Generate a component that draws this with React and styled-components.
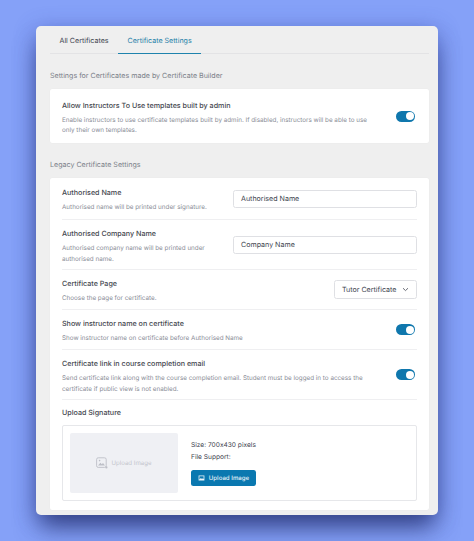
import React from "react";
import styled, { createGlobalStyle } from "styled-components";

const Global = createGlobalStyle`
  html, body { margin: 0; padding: 0; }
  body { font-family: Inter, "Liberation Sans", sans-serif; -webkit-font-smoothing: antialiased; text-rendering: geometricPrecision; }
  * { box-sizing: border-box; }
`;
const Page = styled.div`
  width: 474px; height: 541px; overflow: hidden;
  background: #85a1f8;
  padding: 26px 36px 0;
`;
const Panel = styled.div`
  width: 402px; height: 489px;
  background: #efefef;
  border-radius: 5px;
  padding: 0 9px 0 14px;
  box-shadow: 0 16px 24px -4px rgba(30, 40, 100, 0.72), 0 4px 22px rgba(50, 70, 170, 0.42);
`;
const Tabs = styled.div`
  display: flex; height: 28px;
  border-bottom: 1px solid #e3e3e5;
`;
const Tab = styled.div`
  height: 28px;
  padding: 1px 9.5px 0;
  display: flex; align-items: center;
  font-size: 7.1px;
  color: ${p => (p.$active ? "#1e7fa8" : "#41454f")};
  border-bottom: 1.5px solid ${p => (p.$active ? "#1e83ad" : "transparent")};
`;
const SectionTitle = styled.div`
  font-size: 7.1px; line-height: 12px; color: #7b7f89;
  margin-top: 16px;
  margin-bottom: 7px;
`;
const Card = styled.div`
  background: #fff;
  border-radius: 2px;
  padding: 0 12px;
  box-shadow: 0 0 1px rgba(0,0,0,.08);
`;
const TopCard = styled(Card)`
  height: 54px; display: flex; align-items: center;
  justify-content: space-between;
`;
const LegacyCard = styled(Card)`
  padding-bottom: 9px;
`;
const Row = styled.div`
  height: ${p => p.$h}px;
  display: flex; align-items: center;
  justify-content: space-between;
  border-bottom: 1px solid #efeff1;
`;
const Text = styled.div`
  width: ${p => p.$w}px; flex: none;
  padding-top: 3px;
`;
const Title = styled.div`
  font-size: 7.15px; line-height: 11px; font-weight: 500; color: #44464e;
`;
const Desc = styled.div`
  font-size: 6.3px; line-height: 10.4px; color: #8b8e98; margin-top: 4px;
`;
const Input = styled.div`
  width: 184px; height: 18px; flex: none;
  background: #fff;
  border: 1px solid #dfe0e4;
  border-radius: 2.5px;
  padding: 0 7px;
  display: flex; align-items: center;
  font-size: 7.1px; color: #41454f;
`;
const Select = styled(Input)`
  width: 83px; height: 19px; justify-content: space-between;
  white-space: nowrap;
`;
const ToggleTrack = styled.div`
  width: 19px; height: 11px; flex: none;
  background: #0f77ad;
  border-radius: 6px;
  display: flex; align-items: center; justify-content: flex-end;
  padding-right: 1.5px;
  margin-right: 2px;
`;
const Knob = styled.div`
  width: 8px; height: 8px; border-radius: 50%; background: #fff;
`;
const UploadHeading = styled(Title)`
  padding-top: 7px;
  height: 25px;
`;
const UploadBox = styled.div`
  height: 76px;
  border: 1px solid #e6e7ea;
  border-radius: 2px;
  padding: 7px;
  display: flex;
  gap: 13px;
`;
const Placeholder = styled.div`
  width: 108px; height: 60px;
  background: #eff0f4;
  border-radius: 2px;
  display: flex; align-items: center; justify-content: center;
  gap: 3px;
  font-size: 6.1px; color: #c3c5cc;
`;
const UploadInfo = styled.div`
  display: flex; flex-direction: column; align-items: flex-start;
  padding-top: 6px;
`;
const InfoLine = styled.div`
  font-size: 6.6px; line-height: 12px; color: #41454f;
  font-feature-settings: "calt" 0;
`;
const UploadButton = styled.div`
  margin-top: 7px;
  width: 65px; height: 16px;
  background: #0a78b0;
  color: #e6f2f8;
  border-radius: 2.5px;
  display: flex; align-items: center; justify-content: center;
  gap: 4px;
  font-size: 6.1px; font-weight: 500;
`;

const Toggle = () => <ToggleTrack><Knob /></ToggleTrack>;

const Chevron = () => (
  <svg width="7" height="5" viewBox="0 0 7 5" fill="none" stroke="#5a5e68" strokeWidth="0.9">
    <path d="M1 1.2 L3.5 3.6 L6 1.2" />
  </svg>
);
const GreyImage = () => (
  <svg width="12" height="12" viewBox="0 0 12 12" fill="none" stroke="#bdbfc7" strokeWidth="0.9">
    <rect x="0.6" y="0.8" width="9.6" height="9.6" rx="1.6" />
    <circle cx="3.6" cy="3.6" r="0.8" fill="#bdbfc7" stroke="none" />
    <path d="M2 8.6 L4.4 5.8 L5.8 7.2 L7 6 L9 8.6 Z" fill="#bdbfc7" stroke="none" />
    <circle cx="10.4" cy="10.4" r="1.1" fill="#bdbfc7" stroke="none" />
  </svg>
);
const WhiteImage = () => (
  <svg width="7" height="6" viewBox="0 0 7 6">
    <path fillRule="evenodd" d="M0.6 0.4 H6.4 V5.6 H0.6 Z M1.4 1.3 V4.6 L2.9 3 L4 4 L4.8 3.3 L5.6 4.1 V1.3 Z" fill="#eaf4f9" />
  </svg>
);

export default function App() {
  return (
    <Page>
      <Global />
      <Panel>
        <Tabs>
          <Tab>All Certificates</Tab>
          <Tab $active>Certificate Settings</Tab>
        </Tabs>
        <SectionTitle>Settings for Certificates made by Certificate Builder</SectionTitle>
        <TopCard>
          <Text $w={308}>
            <Title>Allow Instructors To Use templates built by admin</Title>
            <Desc>Enable instructors to use certificate templates built by admin. If disabled, instructors will be able to use only their own templates.</Desc>
          </Text>
          <Toggle />
        </TopCard>
        <SectionTitle>Legacy Certificate Settings</SectionTitle>
        <LegacyCard>
          <Row $h={42}>
            <Text $w={160}>
              <Title>Authorised Name</Title>
              <Desc>Authorised name will be printed under signature.</Desc>
            </Text>
            <Input>Authorised Name</Input>
          </Row>
          <Row $h={50}>
            <Text $w={160}>
              <Title>Authorised Company Name</Title>
              <Desc>Authorised company name will be printed under authorised name.</Desc>
            </Text>
            <Input>Company Name</Input>
          </Row>
          <Row $h={40}>
            <Text $w={160}>
              <Title>Certificate Page</Title>
              <Desc>Choose the page for certificate.</Desc>
            </Text>
            <Select>Tutor Certificate <Chevron /></Select>
          </Row>
          <Row $h={40}>
            <Text $w={300}>
              <Title>Show instructor name on certificate</Title>
              <Desc>Show instructor name on certificate before Authorised Name</Desc>
            </Text>
            <Toggle />
          </Row>
          <Row $h={50}>
            <Text $w={305}>
              <Title>Certificate link in course completion email</Title>
              <Desc>Send certificate link along with the course completion email. Student must be logged in to access the certificate if public view is not enabled.</Desc>
            </Text>
            <Toggle />
          </Row>
          <UploadHeading>Upload Signature</UploadHeading>
          <UploadBox>
            <Placeholder><GreyImage /> Upload Image</Placeholder>
            <UploadInfo>
              <InfoLine>Size: 700x430 pixels</InfoLine>
              <InfoLine>File Support:</InfoLine>
              <UploadButton><WhiteImage /> Upload Image</UploadButton>
            </UploadInfo>
          </UploadBox>
        </LegacyCard>
      </Panel>
    </Page>
  );
}
